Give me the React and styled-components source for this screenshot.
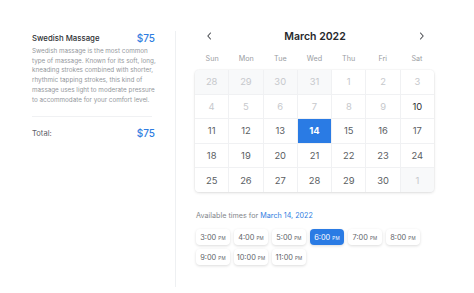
import React, { useState } from 'react';
import styled, { createGlobalStyle } from 'styled-components';

const GlobalStyle = createGlobalStyle`
  body {
    margin: 0;
    background: #fff;
    font-family: Inter, "Noto Sans", sans-serif;
  }
`;

const Page = styled.div`
  display: flex;
  width: 474px;
  height: 293px;
  overflow: hidden;
`;

const Summary = styled.div`
  width: 123px;
  margin-left: 32px;
  padding-top: 32px;
`;

const LineRow = styled.div`
  display: flex;
  justify-content: space-between;
  align-items: center;
  height: 12px;
`;

const ItemName = styled.span`
  font-size: 7.8px;
  font-weight: 500;
  color: #2d2f33;
`;

const Price = styled.span`
  font-size: 10px;
  font-weight: 500;
  color: #2f7de1;
`;

const Description = styled.p`
  margin: 3px 0 0;
  font-size: 6.3px;
  line-height: 9.7px;
  color: #94979c;
  white-space: nowrap;
`;

const Rule = styled.div`
  height: 1px;
  background: #f0f1f3;
  margin: 11px 3px 10px 0;
`;

const TotalLabel = styled.span`
  font-size: 7.6px;
  color: #5d6066;
`;

const Divider = styled.div`
  width: 1px;
  background: #eef0f2;
  margin: 31px 0 6px 20px;
`;

const Booking = styled.div`
  padding: 28px 0 0 19px;
`;

const Calendar = styled.div`
  width: 239px;
`;

const Header = styled.div`
  display: flex;
  align-items: center;
  justify-content: space-between;
  height: 16px;
  padding: 0 8px 0 9px;
`;

const Month = styled.span`
  font-size: 10.5px;
  font-weight: 600;
  color: #26282c;
`;

const NavButton = styled.button`
  border: 0;
  background: none;
  padding: 0;
  width: 10px;
  height: 10px;
  display: flex;
  align-items: center;
  justify-content: center;
  color: #4a4d52;
`;

const WeekDays = styled.div`
  display: grid;
  grid-template-columns: repeat(7, 1fr);
  margin-top: 9px;
  height: 10px;
  align-items: center;
`;

const WeekDay = styled.span`
  text-align: center;
  font-size: 7.2px;
  color: #9a9da2;
`;

const Grid = styled.div`
  display: grid;
  grid-template-columns: repeat(7, 1fr);
  grid-template-rows: repeat(5, 1fr);
  gap: 1px;
  height: 122px;
  margin-top: 7px;
  background: #f0f1f3;
  border-radius: 4px;
  overflow: hidden;
  box-shadow: 0 1px 3px rgba(0, 0, 0, 0.12), 0 0 0 1px rgba(0, 0, 0, 0.02);
`;

const Cell = styled.div`
  display: flex;
  align-items: center;
  justify-content: center;
  font-size: 9.4px;
  font-weight: ${p => (p.$selected ? 700 : 400)};
  color: ${p => (p.$selected ? '#fff' : p.$muted ? '#c6c8cc' : p.$strong ? '#2d2f33' : '#5a5d62')};
  background: ${p => (p.$selected ? '#2a7be4' : p.$outside ? '#f8f9fa' : '#fff')};
`;

const Times = styled.div`
  margin-top: 19px;
  padding-left: 1px;
`;

const TimesLabel = styled.div`
  font-size: 7.2px;
  line-height: 10px;
  color: #83868b;
`;

const DateLink = styled.span`
  color: #2f7de1;
`;

const Chips = styled.div`
  display: grid;
  grid-template-columns: repeat(6, 34px);
  gap: 4px;
  margin-top: 8px;
`;

const Chip = styled.button`
  height: 16px;
  border: 0;
  border-radius: 4px;
  padding: 0;
  font-family: inherit;
  font-size: 7.4px;
  color: ${p => (p.$active ? '#fff' : '#62656a')};
  background: ${p => (p.$active ? '#2a7be4' : '#fff')};
  box-shadow: 0 1px 3px rgba(0, 0, 0, 0.14);
  white-space: nowrap;
`;

const Meridiem = styled.span`
  font-size: 4.6px;
  margin-left: 2px;
  letter-spacing: 0.2px;
`;

const Chevron = ({ dir }) => (
  <svg width="7" height="8" viewBox="0 0 7 8" fill="none">
    <path
      d={dir === 'left' ? 'M4.5 1L1.8 4L4.5 7' : 'M2.5 1L5.2 4L2.5 7'}
      stroke="currentColor"
      strokeWidth="1.1"
      strokeLinecap="round"
      strokeLinejoin="round"
    />
  </svg>
);

const days = [
  ...[28, 29, 30, 31].map(d => ({ d, muted: true, outside: true })),
  ...[1, 2, 3, 4, 5, 6, 7, 8, 9].map(d => ({ d, muted: true })),
  ...Array.from({ length: 21 }, (_, i) => ({ d: i + 10, strong: i === 0 })),
  { d: 1, muted: true, outside: true },
];

const times = ['3:00', '4:00', '5:00', '6:00', '7:00', '8:00', '9:00', '10:00', '11:00'];

const App = () => {
  const [selected, setSelected] = useState('6:00');

  return (
    <Page>
      <GlobalStyle />
      <Summary>
        <LineRow>
          <ItemName>Swedish Massage</ItemName>
          <Price>$75</Price>
        </LineRow>
        <Description>
          Swedish massage is the most common<br />
          type of massage. Known for its soft, long,<br />
          kneading strokes combined with shorter,<br />
          rhythmic tapping strokes, this kind of<br />
          massage uses light to moderate pressure<br />
          to accommodate for your comfort level.
        </Description>
        <Rule />
        <LineRow>
          <TotalLabel>Total:</TotalLabel>
          <Price>$75</Price>
        </LineRow>
      </Summary>
      <Divider />
      <Booking>
        <Calendar>
          <Header>
            <NavButton><Chevron dir="left" /></NavButton>
            <Month>March 2022</Month>
            <NavButton><Chevron dir="right" /></NavButton>
          </Header>
          <WeekDays>
            {['Sun', 'Mon', 'Tue', 'Wed', 'Thu', 'Fri', 'Sat'].map(w => (
              <WeekDay key={w}>{w}</WeekDay>
            ))}
          </WeekDays>
          <Grid>
            {days.map((day, i) => (
              <Cell
                key={i}
                $muted={day.muted}
                $outside={day.outside}
                $strong={day.strong}
                $selected={!day.muted && day.d === 14}
              >
                {day.d}
              </Cell>
            ))}
          </Grid>
        </Calendar>
        <Times>
          <TimesLabel>
            Available times for <DateLink>March 14, 2022</DateLink>
          </TimesLabel>
          <Chips>
            {times.map(t => (
              <Chip key={t} $active={t === selected} onClick={() => setSelected(t)}>
                {t}<Meridiem>PM</Meridiem>
              </Chip>
            ))}
          </Chips>
        </Times>
      </Booking>
    </Page>
  );
};

export default App;
